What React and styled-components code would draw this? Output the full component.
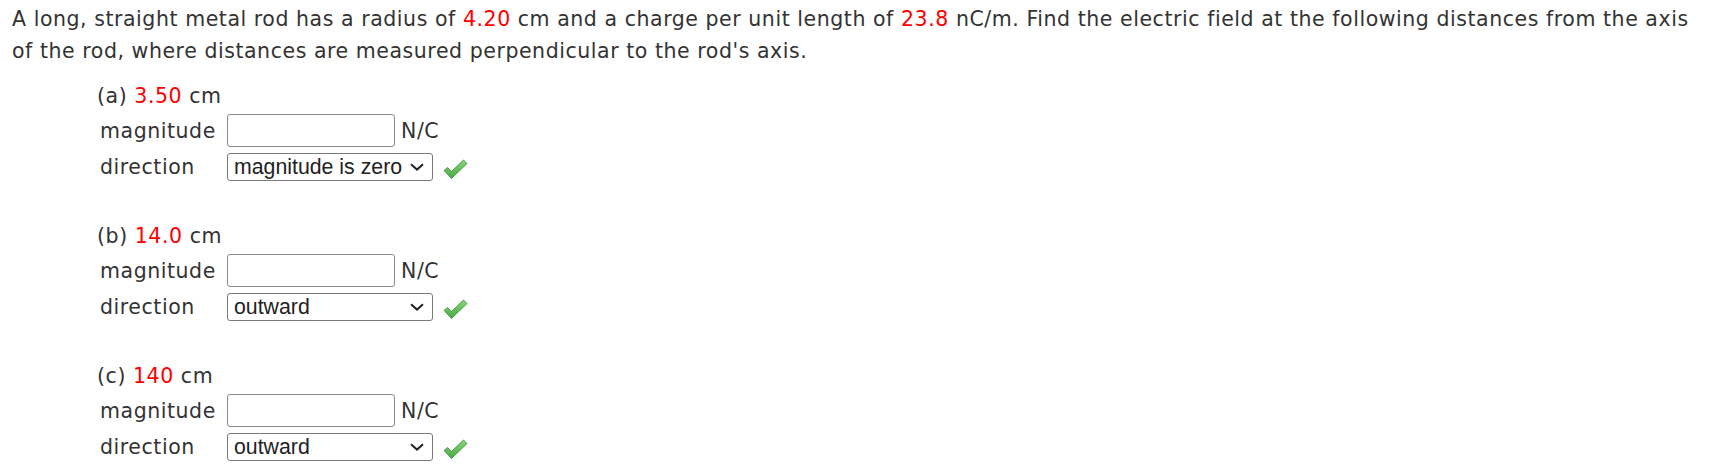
import styled, { createGlobalStyle } from 'styled-components';

const GlobalStyle = createGlobalStyle`
  body {
    margin: 0;
    background: #ffffff;
    color: #333333;
    font-family: "DejaVu Sans", Verdana, sans-serif;
  }
`;

const Page = styled.div`
  padding: 3px 12px 0 12px;
  font-size: 20.5px;
  letter-spacing: 0.55px;
`;

const Question = styled.p`
  margin: 0;
  line-height: 32px;
`;

const Red = styled.span`
  color: #ff0000;
`;

const Part = styled.div`
  margin: 13px 0 0 85px;

  & + & {
    margin-top: 39px;
  }
`;

const PartTitle = styled.div`
  line-height: 32px;
  margin-bottom: 2px;
`;

const Row = styled.div`
  display: flex;
  align-items: center;
  padding-left: 3px;
  margin-top: ${(p) => (p.$first ? '0' : '6px')};
`;

const Label = styled.span`
  width: 127px;
  flex-shrink: 0;
`;

const Input = styled.input`
  box-sizing: border-box;
  width: 168px;
  height: 33px;
  border: 1px solid #8a8a8a;
  border-radius: 3px;
  padding: 0 6px;
  font-family: "Liberation Sans", Arial, sans-serif;
  font-size: 20px;
  outline: none;
  background: #fff;
`;

const Unit = styled.span`
  margin-left: 6px;
`;

const SelectBox = styled.div`
  position: relative;
  width: 206px;
  height: 28px;
`;

const Select = styled.select`
  appearance: none;
  box-sizing: border-box;
  width: 100%;
  height: 100%;
  border: 1px solid #7a7a7a;
  border-radius: 3px;
  padding: 0 0 0 6px;
  background: #fff;
  color: #222;
  font-family: "Liberation Sans", Arial, sans-serif;
  font-size: 21.3px;
  letter-spacing: 0;
  outline: none;
`;

const Chevron = styled.svg`
  position: absolute;
  right: 9px;
  top: 10px;
  pointer-events: none;
`;

const Check = styled.svg`
  margin-left: 10px;
  margin-top: 4px;
`;

const CheckMark = () => (
  <Check width="25" height="21" viewBox="0 0 25 21">
    <defs>
      <linearGradient id="ok" x1="0" y1="0" x2="0" y2="1">
        <stop offset="0" stopColor="#8ad67a" />
        <stop offset="1" stopColor="#45a845" />
      </linearGradient>
    </defs>
    <path
      d="M1 11.5 L4.5 8.5 L8.5 12.5 L20.5 1 L24 4.5 L8.5 19.5 Z"
      fill="url(#ok)"
      stroke="#4f9f4a"
      strokeWidth="1"
      strokeLinejoin="round"
    />
  </Check>
);

const parts = [
  { key: 'a', value: '3.50', direction: 'magnitude is zero' },
  { key: 'b', value: '14.0', direction: 'outward' },
  { key: 'c', value: '140', direction: 'outward' },
];

const options = ['outward', 'inward', 'magnitude is zero'];

const App = () => (
  <Page>
    <GlobalStyle />
    <Question>
      A long, straight metal rod has a radius of <Red>4.20</Red> cm and a charge per unit length of{' '}
      <Red>23.8</Red> nC/m. Find the electric field at the following distances from the axis of the rod,
      where distances are measured perpendicular to the rod's axis.
    </Question>
    {parts.map((part) => (
      <Part key={part.key}>
        <PartTitle>
          ({part.key}) <Red>{part.value}</Red> cm
        </PartTitle>
        <Row $first>
          <Label>magnitude</Label>
          <Input type="text" />
          <Unit>N/C</Unit>
        </Row>
        <Row>
          <Label>direction</Label>
          <SelectBox>
            <Select defaultValue={part.direction}>
              {options.map((o) => (
                <option key={o} value={o}>
                  {o}
                </option>
              ))}
            </Select>
            <Chevron width="14" height="8" viewBox="0 0 14 8">
              <path d="M1 1.2 L7 6.6 L13 1.2" fill="none" stroke="#222" strokeWidth="2" />
            </Chevron>
          </SelectBox>
          <CheckMark />
        </Row>
      </Part>
    ))}
  </Page>
);

export default App;
